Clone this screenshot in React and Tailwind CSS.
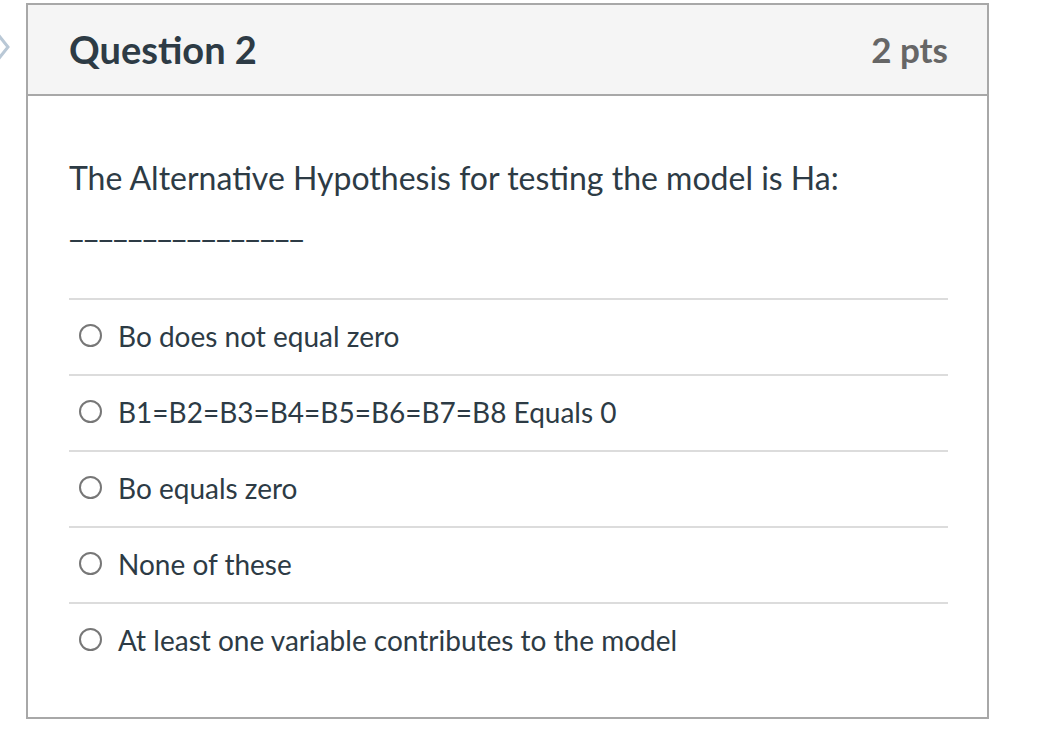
import { useState } from 'react';

const options = [
  'Bo does not equal zero',
  'B1=B2=B3=B4=B5=B6=B7=B8 Equals 0',
  'Bo equals zero',
  'None of these',
  'At least one variable contributes to the model',
];

const Chevron = () => (
  <svg width="26" height="90" viewBox="0 0 26 90" className="shrink-0">
    <polyline points="-4,29 8,44 -4,59" fill="none" stroke="#b9c8d6" strokeWidth="3" />
  </svg>
);

const Option = ({ label, checked, onPick }) => (
  <label className="flex items-center h-[76px] pl-[10px] pb-[3px] cursor-pointer border-t-2 border-[#dcdcdc]">
    <span
      className="w-[23px] h-[23px] rounded-full border-2 border-[#777] bg-white flex items-center justify-center shrink-0"
      onClick={onPick}
    >
      {checked && <span className="w-[11px] h-[11px] rounded-full bg-[#2d3b45]" />}
    </span>
    <span className="ml-[16px] text-[28px] text-[#2d3b45]">{label}</span>
  </label>
);

export default function App() {
  const [picked, setPicked] = useState(null);

  return (
    <div className="w-[1048px] h-[750px] bg-white flex items-start pt-[3px] font-['Lato','Liberation_Sans',sans-serif]">
      <Chevron />
      <div className="w-[963px] h-[716px] border-2 border-[#a8a8a8] flex flex-col">
        <div className="h-[91px] bg-[#f5f5f5] border-b-2 border-[#a8a8a8] flex items-center justify-between pl-[41px] pr-[39px] shrink-0">
          <h2 className="text-[38px] font-bold text-[#2d3b45]">Question 2</h2>
          <span className="text-[35px] font-bold text-[#666]">2 pts</span>
        </div>
        <div className="pl-[41px] pr-[39px] pt-[60px]">
          <p className="text-[32px] leading-[44px] text-[#2d3b45]">
            The Alternative Hypothesis for testing the model is Ha:
          </p>
          <p className="text-[32px] leading-[44px] text-[#2d3b45] mt-[3px]">________________</p>
          <div className="mt-[51px] flex flex-col">
            {options.map((o, i) => (
              <Option key={i} label={o} checked={picked === i} onPick={() => setPicked(i)} />
            ))}
          </div>
        </div>
      </div>
    </div>
  );
}
